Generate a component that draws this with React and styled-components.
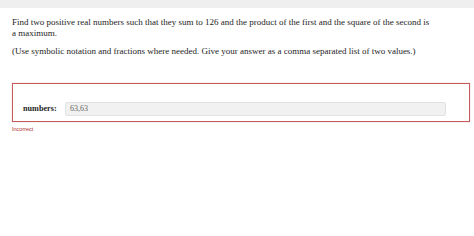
import styled, { createGlobalStyle } from 'styled-components'

const Global = createGlobalStyle`
    body {
        margin: 0;
        background: #fff;
        font-family: "Liberation Serif", "Times New Roman", serif;
        color: #1e1e1e;
    }
`

const TopBar = styled.div`
    height: 8px;
    background: #efefef;
`

const Content = styled.div`
    padding: 9px 4px 0 12px;
`

const Text = styled.p`
    margin: 0 0 7px;
    max-width: 420px;
    font-size: 9px;
    line-height: 11px;
`

const Answer = styled.div`
    margin-top: 26px;
    border: 1px solid #c65b5b;
    display: flex;
    align-items: center;
    padding: 12px 23px 0 10px;
    height: 25px;
    box-shadow: 0 0 1px rgba(198, 91, 91, 0.5);
`

const Label = styled.label`
    font-size: 8.2px;
    font-weight: bold;
    width: 42px;
    flex-shrink: 0;
`

const Input = styled.div`
    flex: 1;
    height: 14px;
    box-sizing: border-box;
    background: #f1f1f1;
    border: 1px solid #e2e2e2;
    border-radius: 2px;
    font-size: 8px;
    color: #666;
    padding: 0 4px;
    display: flex;
    align-items: center;
`

const Feedback = styled.div`
    font-family: "Liberation Sans", Arial, sans-serif;
    font-size: 5.5px;
    color: #b03030;
    margin-top: 4px;
`

export default function App() {
    return (
        <>
            <Global />
            <TopBar />
            <Content>
                <Text>
                    Find two positive real numbers such that they sum to 126 and the product of the first and the square of the second is a maximum.
                </Text>
                <Text>
                    (Use symbolic notation and fractions where needed. Give your answer as a comma separated list of two values.)
                </Text>
                <Answer>
                    <Label>numbers:</Label>
                    <Input>63,63</Input>
                </Answer>
                <Feedback>Incorrect</Feedback>
            </Content>
        </>
    )
}
